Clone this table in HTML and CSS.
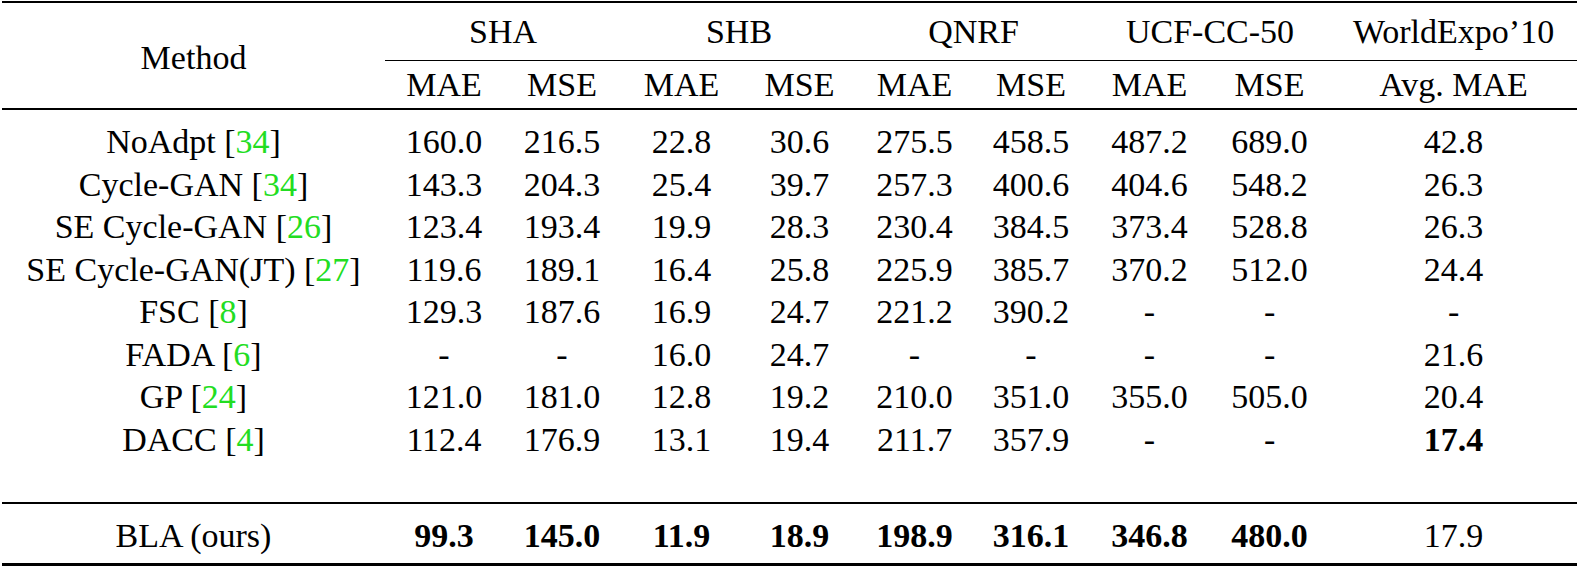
FILE: index.html
```html
<!DOCTYPE html>
<html lang="en">
<head>
<meta charset="utf-8">
<title>Results table</title>
<link rel="stylesheet" href="styles.css">
</head>
<body>
<table class="results">
  <colgroup>
    <col class="c-method">
    <col class="c-sha-mae"><col class="c-sha-mse">
    <col class="c-shb-mae"><col class="c-shb-mse">
    <col class="c-qnrf-mae"><col class="c-qnrf-mse">
    <col class="c-ucf-mae"><col class="c-ucf-mse">
    <col class="c-expo">
  </colgroup>
  <thead>
    <tr class="group-row">
      <th class="method-head" rowspan="2">Method</th>
      <th colspan="2">SHA</th>
      <th colspan="2">SHB</th>
      <th colspan="2">QNRF</th>
      <th colspan="2">UCF-CC-50</th>
      <th>WorldExpo’10</th>
    </tr>
    <tr class="metric-row">
      <th>MAE</th><th>MSE</th>
      <th>MAE</th><th>MSE</th>
      <th>MAE</th><th>MSE</th>
      <th>MAE</th><th>MSE</th>
      <th>Avg. MAE</th>
    </tr>
  </thead>
  <tbody class="baselines">
    <tr><td>NoAdpt [<span class="cite">34</span>]</td><td>160.0</td><td>216.5</td><td>22.8</td><td>30.6</td><td>275.5</td><td>458.5</td><td>487.2</td><td>689.0</td><td>42.8</td></tr>
    <tr><td>Cycle-GAN [<span class="cite">34</span>]</td><td>143.3</td><td>204.3</td><td>25.4</td><td>39.7</td><td>257.3</td><td>400.6</td><td>404.6</td><td>548.2</td><td>26.3</td></tr>
    <tr><td>SE Cycle-GAN [<span class="cite">26</span>]</td><td>123.4</td><td>193.4</td><td>19.9</td><td>28.3</td><td>230.4</td><td>384.5</td><td>373.4</td><td>528.8</td><td>26.3</td></tr>
    <tr><td>SE Cycle-GAN(JT) [<span class="cite">27</span>]</td><td>119.6</td><td>189.1</td><td>16.4</td><td>25.8</td><td>225.9</td><td>385.7</td><td>370.2</td><td>512.0</td><td>24.4</td></tr>
    <tr><td>FSC [<span class="cite">8</span>]</td><td>129.3</td><td>187.6</td><td>16.9</td><td>24.7</td><td>221.2</td><td>390.2</td><td>-</td><td>-</td><td>-</td></tr>
    <tr><td>FADA [<span class="cite">6</span>]</td><td>-</td><td>-</td><td>16.0</td><td>24.7</td><td>-</td><td>-</td><td>-</td><td>-</td><td>21.6</td></tr>
    <tr><td>GP [<span class="cite">24</span>]</td><td>121.0</td><td>181.0</td><td>12.8</td><td>19.2</td><td>210.0</td><td>351.0</td><td>355.0</td><td>505.0</td><td>20.4</td></tr>
    <tr><td>DACC [<span class="cite">4</span>]</td><td>112.4</td><td>176.9</td><td>13.1</td><td>19.4</td><td>211.7</td><td>357.9</td><td>-</td><td>-</td><td class="best">17.4</td></tr>
  </tbody>
  <tbody class="ours">
    <tr><td>BLA (ours)</td><td class="best">99.3</td><td class="best">145.0</td><td class="best">11.9</td><td class="best">18.9</td><td class="best">198.9</td><td class="best">316.1</td><td class="best">346.8</td><td class="best">480.0</td><td>17.9</td></tr>
  </tbody>
</table>
</body>
</html>
```

FILE: styles.css
```css
html, body {
  margin: 0;
  padding: 0;
  background: #ffffff;
}

body {
  font-family: "Liberation Serif", "Times New Roman", serif;
  color: #000000;
}

.results {
  margin: 1px 0 0 2px;
  width: 1575px;
  table-layout: fixed;
  border-collapse: separate;
  border-spacing: 0;
  font-family: "Liberation Serif", "Times New Roman", serif;
  font-size: 34px;
}

.c-method { width: 383px; }
.c-sha-mae { width: 118px; }
.c-sha-mse { width: 118px; }
.c-shb-mae { width: 121px; }
.c-shb-mse { width: 115px; }
.c-qnrf-mae { width: 115px; }
.c-qnrf-mse { width: 118px; }
.c-ucf-mae { width: 119px; }
.c-ucf-mse { width: 121px; }
.c-expo { width: 247px; }

.results th,
.results td {
  padding: 0;
  text-align: center;
  font-weight: normal;
  white-space: nowrap;
}

.group-row th {
  border-top: 2px solid #000;
  border-bottom: 1px solid #000;
  height: 57px;
  line-height: 57px;
}

.group-row th.method-head {
  border-bottom: 2px solid #000;
  padding-top: 5px;
  line-height: 40px;
  vertical-align: middle;
}

.metric-row th {
  border-bottom: 2px solid #000;
  height: 47px;
  line-height: 47px;
}

.baselines td {
  line-height: 42.5px;
}

.baselines tr:first-child td {
  padding-top: 11px;
}

.baselines tr:last-child td {
  padding-bottom: 41px;
}

.ours td {
  border-top: 2px solid #000;
  border-bottom: 3px solid #000;
  padding-top: 4px;
  line-height: 55px;
}

.results .cite {
  color: #22dd22;
}

.results .best {
  font-weight: bold;
}
```
